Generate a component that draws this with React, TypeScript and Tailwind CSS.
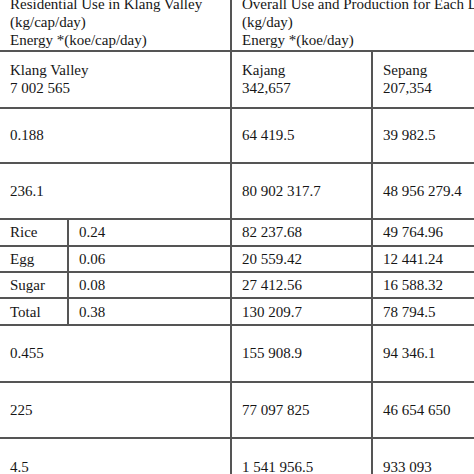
import React from "react";

const B = "border-[#555]";

function Cell({
  className = "",
  lines,
  align = "center",
}: {
  className?: string;
  lines: string[];
  align?: "center" | "end";
}) {
  return (
    <div
      className={`flex ${align === "center" ? "items-center" : "items-end pb-[1px]"} pl-[10px] ${B} ${className}`}
    >
      <div className="whitespace-nowrap">
        {lines.map((l, i) => (
          <div key={i}>{l}</div>
        ))}
      </div>
    </div>
  );
}

export default function App() {
  const tall: [string[], string[], string[]][] = [
    [["Klang Valley", "7 002 565"], ["Kajang", "342,657"], ["Sepang", "207,354"]],
    [["0.188"], ["64 419.5"], ["39 982.5"]],
    [["236.1"], ["80 902 317.7"], ["48 956 279.4"]],
  ];
  const small: [string, string, string, string][] = [
    ["Rice", "0.24", "82 237.68", "49 764.96"],
    ["Egg", "0.06", "20 559.42", "12 441.24"],
    ["Sugar", "0.08", "27 412.56", "16 588.32"],
    ["Total", "0.38", "130 209.7", "78 794.5"],
  ];
  const tail: [string, string, string][] = [
    ["0.455", "155 908.9", "94 346.1"],
    ["225", "77 097 825", "46 654 650"],
    ["4.5", "1 541 956.5", "933 093"],
  ];

  return (
    <div
      className="w-[474px] h-[474px] overflow-hidden bg-white text-[#161616] text-[15px] leading-[18px]"
      style={{ fontFamily: '"Liberation Serif", "Times New Roman", serif' }}
    >
      <div className="-mt-[10px] grid grid-cols-[69px_163px_141px_200px] grid-rows-[62px_56.7px_55px_56.3px_26.7px_26.6px_26px_26.7px_56.7px_56px_58px]">
        <Cell
          className="col-span-2 border-r-2 border-b-2"
          align="end"
          lines={["Residential Use in Klang Valley", "(kg/cap/day)", "Energy *(koe/cap/day)"]}
        />
        <Cell
          className="col-span-2 border-b-2"
          align="end"
          lines={["Overall Use and Production for Each District", "(kg/day)", "Energy *(koe/day)"]}
        />
        {tall.map((r, i) => (
          <React.Fragment key={`t${i}`}>
            <Cell className="col-span-2 border-r-2 border-b-2" lines={r[0]} />
            <Cell className="border-r-2 border-b-2" lines={r[1]} />
            <Cell className="border-b-2" lines={r[2]} />
          </React.Fragment>
        ))}
        {small.map((r, i) => (
          <React.Fragment key={`s${i}`}>
            <Cell className="border-r-2 border-b-2" lines={[r[0]]} />
            <Cell className="border-r-2 border-b-2" lines={[r[1]]} />
            <Cell className="border-r-2 border-b-2" lines={[r[2]]} />
            <Cell className="border-b-2" lines={[r[3]]} />
          </React.Fragment>
        ))}
        {tail.map((r, i) => (
          <React.Fragment key={`e${i}`}>
            <Cell className="col-span-2 border-r-2 border-b-2" lines={[r[0]]} />
            <Cell className="border-r-2 border-b-2" lines={[r[1]]} />
            <Cell className="border-b-2" lines={[r[2]]} />
          </React.Fragment>
        ))}
      </div>
    </div>
  );
}
